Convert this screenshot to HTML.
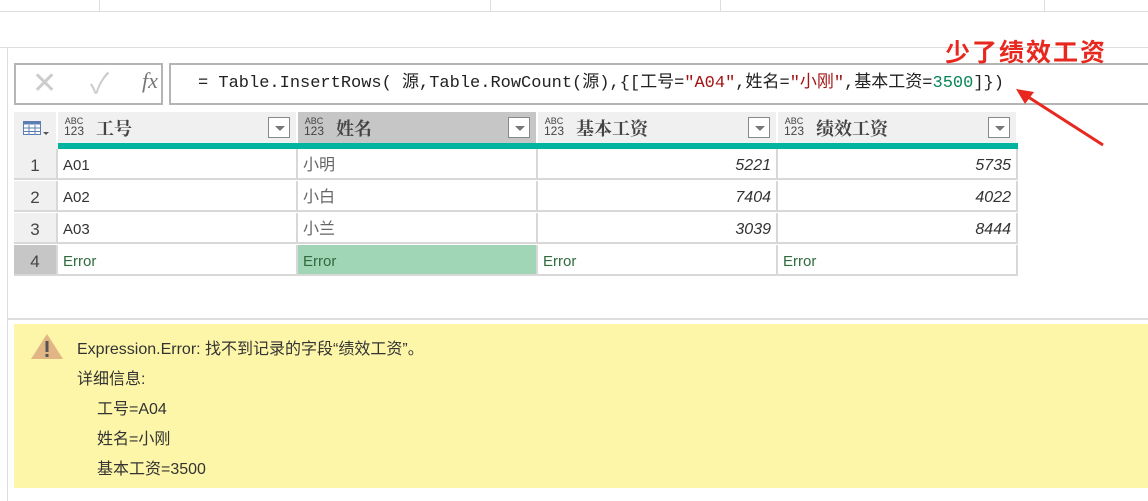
<!DOCTYPE html>
<html><head><meta charset="utf-8"><style>
*{margin:0;padding:0;box-sizing:border-box}
body{width:1148px;height:501px;background:#fff;position:relative;overflow:hidden;font-family:"Liberation Sans","Noto Sans CJK SC",sans-serif;color:#333}
.a{position:absolute}
.hd{top:0;height:11px;border-right:1px solid #ddd}
.mono{font-family:"Liberation Mono","Noto Sans CJK SC",monospace}
.cell{position:absolute;height:31px;border-right:2px solid #d8d8d8;border-bottom:2px solid #d8d8d8;background:#fff;font-size:15px;line-height:29px;padding:2px 5px 0}
.num{font-style:italic;text-align:right;font-size:16px}
.rn{background:#f0f0f0;text-align:center;font-size:17px;color:#444}
.err{color:#2e6b3e}
.th{position:absolute;top:112px;height:31px;background:#f0f0f0;border-right:2px solid #fff}
.abc{position:absolute;left:6px;top:5px;font-size:9px;line-height:9px;color:#444;text-align:center}
.abc b{display:block;font-weight:normal;font-size:12px;line-height:11px}
.tt{position:absolute;left:38px;top:3px;font-size:18px;font-family:"Noto Serif CJK SC",serif;color:#444;font-weight:bold}
.dd{position:absolute;right:6px;top:5px;width:22px;height:21px;border:1px solid #888;background:#fff}
.dd:after{content:"";position:absolute;left:6px;top:8px;border:5px solid transparent;border-top:5px solid #777;border-bottom:0}
.msg{position:absolute;font-size:16px;color:#333}
</style></head><body>
<div class="a hd" style="left:0;width:100px"></div>
<div class="a hd" style="left:100px;width:391px"></div>
<div class="a hd" style="left:491px;width:230px"></div>
<div class="a hd" style="left:721px;width:324px"></div>
<div class="a" style="left:0;top:11px;width:1148px;height:1px;background:#ddd"></div>
<div class="a" style="left:0;top:47px;width:1148px;height:1px;background:#ddd"></div>
<div class="a" style="left:7px;top:48px;width:1px;height:453px;background:#ddd"></div>
<!-- formula bar -->
<div class="a" style="left:14px;top:63px;width:149px;height:42px;border:2px solid #b5b5b5"></div>
<div class="a" style="left:32px;top:70px;font-size:30px;color:#ccc;line-height:28px">✕</div>
<div class="a" style="left:90px;top:70px;font-size:28px;color:#ccc;line-height:28px">✓</div>
<div class="a" style="left:142px;top:68px;font-size:22px;color:#777;font-style:italic;font-family:'Liberation Serif',serif">fx</div>
<div class="a" style="left:169px;top:63px;width:990px;height:42px;border:2px solid #b5b5b5"></div>
<div class="a mono" style="left:198px;top:74px;font-size:17px;line-height:20px;color:#222;white-space:nowrap">= Table.InsertRows( 源,Table.RowCount(源),{[工号=<span style="color:#a31515">"A04"</span>,姓名=<span style="color:#a31515">"小刚"</span>,基本工资=<span style="color:#098658">3500</span>]})</div>
<div class="a" style="left:945px;top:36px;font-size:25px;line-height:34px;font-weight:bold;color:#e8281e;letter-spacing:2px">少了绩效工资</div>
<svg class="a" style="left:1010px;top:85px" width="100" height="65"><line x1="93" y1="60" x2="12" y2="8" stroke="#e8281e" stroke-width="3"/><polygon points="6,4 24,7 15,19" fill="#e8281e"/></svg>
<!-- table header -->
<div class="th" style="left:14px;width:44px"><svg style="position:absolute;left:9px;top:9px" width="26" height="16"><rect x="0.5" y="0.5" width="17" height="13" fill="#fff" stroke="#5b7fb5"/><rect x="0.5" y="0.5" width="17" height="3" fill="#5b7fb5"/><path d="M6 4V14M12 4V14M1 7H18M1 10.5H18" stroke="#5b7fb5"/><path d="M20 11l3 3 3-3z" fill="#555"/></svg></div>
<div class="th" style="left:58px;width:240px"><div class="abc">ABC<b>123</b></div><div class="tt">工号</div><div class="dd"></div></div>
<div class="th" style="left:298px;width:240px;background:#c6c6c6"><div class="abc">ABC<b>123</b></div><div class="tt">姓名</div><div class="dd"></div></div>
<div class="th" style="left:538px;width:240px"><div class="abc">ABC<b>123</b></div><div class="tt">基本工资</div><div class="dd"></div></div>
<div class="th" style="left:778px;width:240px"><div class="abc">ABC<b>123</b></div><div class="tt">绩效工资</div><div class="dd"></div></div>
<div class="a" style="left:14px;top:143px;width:44px;height:6px;background:#f0f0f0"></div>
<div class="a" style="left:58px;top:143px;width:960px;height:6px;background:#00b4a0"></div>
<!-- rows -->
<div class="cell rn" style="left:14px;top:149px;width:44px">1</div>
<div class="cell" style="left:58px;top:149px;width:240px">A01</div>
<div class="cell" style="left:298px;top:149px;width:240px;color:#666;font-size:16px">小明</div>
<div class="cell num" style="left:538px;top:149px;width:240px">5221</div>
<div class="cell num" style="left:778px;top:149px;width:240px">5735</div>
<div class="cell rn" style="left:14px;top:181px;width:44px">2</div>
<div class="cell" style="left:58px;top:181px;width:240px">A02</div>
<div class="cell" style="left:298px;top:181px;width:240px;color:#666;font-size:16px">小白</div>
<div class="cell num" style="left:538px;top:181px;width:240px">7404</div>
<div class="cell num" style="left:778px;top:181px;width:240px">4022</div>
<div class="cell rn" style="left:14px;top:213px;width:44px">3</div>
<div class="cell" style="left:58px;top:213px;width:240px">A03</div>
<div class="cell" style="left:298px;top:213px;width:240px;color:#666;font-size:16px">小兰</div>
<div class="cell num" style="left:538px;top:213px;width:240px">3039</div>
<div class="cell num" style="left:778px;top:213px;width:240px">8444</div>
<div class="cell rn" style="left:14px;top:245px;width:44px;background:#c6c6c6">4</div>
<div class="cell err" style="left:58px;top:245px;width:240px">Error</div>
<div class="cell err" style="left:298px;top:245px;width:240px;background:#a0d5b5">Error</div>
<div class="cell err" style="left:538px;top:245px;width:240px">Error</div>
<div class="cell err" style="left:778px;top:245px;width:240px">Error</div>
<!-- error panel -->
<div class="a" style="left:8px;top:318px;width:1140px;height:2px;background:#ddd"></div>
<div class="a" style="left:14px;top:324px;width:1134px;height:164px;background:#fdf6a9"></div>
<svg class="a" style="left:30px;top:333px" width="34" height="27"><polygon points="17,1 33,26 1,26" fill="#e2b585"/><rect x="15.5" y="8" width="3" height="11" fill="#555"/><rect x="15.5" y="21" width="3" height="3" fill="#555"/></svg>
<div class="msg" style="left:77px;top:335px">Expression.Error: 找不到记录的字段“绩效工资”。</div>
<div class="msg" style="left:77px;top:365px">详细信息:</div>
<div class="msg" style="left:97px;top:395px">工号=A04</div>
<div class="msg" style="left:97px;top:425px">姓名=小刚</div>
<div class="msg" style="left:97px;top:455px">基本工资=3500</div>
</body></html>
